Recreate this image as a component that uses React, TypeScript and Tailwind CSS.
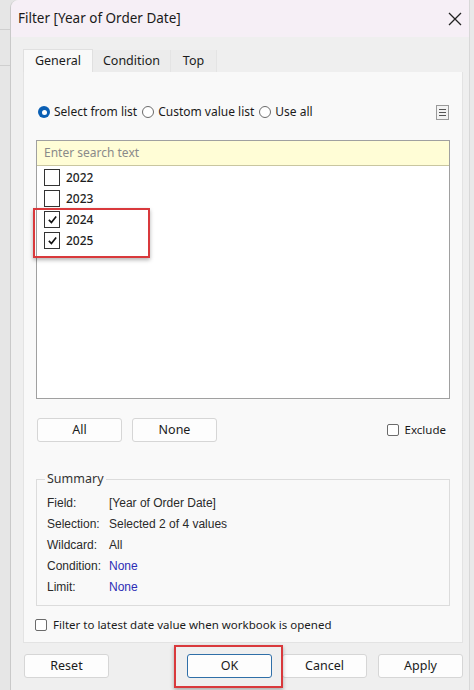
import React from 'react';

const font = { fontFamily: '"Noto Sans", "Open Sans", sans-serif' };
const tahoma = { fontFamily: '"Liberation Sans", Arial, sans-serif' };

const Radio: React.FC<{ checked?: boolean; label: string }> = ({ checked, label }) => (
  <label className="flex items-center gap-[4px]">
    {checked ? (
      <span className="w-[12px] h-[12px] rounded-full bg-[#0a5fb4] flex items-center justify-center">
        <span className="w-[5px] h-[5px] rounded-full bg-white" />
      </span>
    ) : (
      <span className="w-[12px] h-[12px] rounded-full border border-[#6b6b6b] bg-white" />
    )}
    <span>{label}</span>
  </label>
);

const Check: React.FC<{ checked?: boolean }> = ({ checked }) => (
  <span className="w-[16px] h-[17px] border border-[#333] bg-white flex items-center justify-center shrink-0">
    {checked && (
      <svg viewBox="0 0 12 12" className="w-[11px] h-[11px]">
        <path d="M2 6.5 L4.8 9.2 L10 2.8" fill="none" stroke="#111" strokeWidth="1.8" />
      </svg>
    )}
  </span>
);

const Btn: React.FC<{ label: string; primary?: boolean; className?: string }> = ({ label, primary, className }) => (
  <button
    className={`h-[24px] w-[85px] rounded-[3px] bg-[#fdfdfd] text-[12.5px] text-[#1b1b1b] ${
      primary ? 'border border-[#2f6fa8]' : 'border border-[#d6d6d6]'
    } ${className ?? ''}`}
  >
    {label}
  </button>
);

const years = [
  { y: '2022', c: false },
  { y: '2023', c: false },
  { y: '2024', c: true },
  { y: '2025', c: true },
];

const summary = [
  { k: 'Field:', v: '[Year of Order Date]' },
  { k: 'Selection:', v: 'Selected 2 of 4 values' },
  { k: 'Wildcard:', v: 'All' },
  { k: 'Condition:', v: 'None', blue: true },
  { k: 'Limit:', v: 'None', blue: true },
];

export default function App() {
  return (
    <div className="w-[474px] h-[690px] flex bg-[#e4e4e4] overflow-hidden text-[#1b1b1b]" style={font}>
      {/* background window behind the dialog */}
      <div className="w-[10px] shrink-0 flex flex-col bg-[#e6e6e6]">
        <div className="h-[30px] border-b border-[#cfcfcf]" />
        <div className="h-[36px] border-b border-[#cfcfcf]" />
      </div>

      {/* dialog */}
      <div className="w-[459px] shrink-0 flex flex-col bg-[#efefef] border-l border-[#c9c9c9] rounded-tl-[8px] relative">
        <div className="h-[37px] flex items-center justify-between pl-[7px] pr-[7px] bg-[#f6eff6] rounded-tl-[8px]">
          <span className="text-[13.5px] text-[#1a1a1a]">Filter [Year of Order Date]</span>
          <svg viewBox="0 0 14 14" className="w-[14px] h-[14px]">
            <path d="M1 1 L13 13 M13 1 L1 13" stroke="#222" strokeWidth="1.3" />
          </svg>
        </div>

        <div className="pl-[12px] pr-[6px] pt-[12px] flex flex-col">
          {/* tabs */}
          <div className="flex items-end text-[12.5px] h-[23px]">
            <div className="h-[23px] w-[70px] flex items-center justify-center bg-[#f9f9f9] border border-b-0 border-[#e0e0e0]">
              General
            </div>
            <div className="h-[22px] w-[78px] flex items-center justify-center bg-[#ececec] border-r border-[#e4e4e4]">
              Condition
            </div>
            <div className="h-[22px] w-[46px] flex items-center justify-center bg-[#ececec] border-r border-[#e4e4e4]">
              Top
            </div>
          </div>

          {/* panel */}
          <div className="h-[571px] bg-[#f9f9f9] border border-t-0 border-[#e3e3e3] pl-[12px] pr-[12px] flex flex-col">
            <div className="mt-[32px] h-[16px] flex items-center text-[12px] pl-[2px]">
              <Radio checked label="Select from list" />
              <span className="w-[5px]" />
              <Radio label="Custom value list" />
              <span className="w-[5px]" />
              <Radio label="Use all" />
              <span className="ml-auto mr-[1px] w-[13px] h-[15px] border border-[#9a9a9a] bg-[#f3f3f3] flex flex-col items-center justify-center gap-[2px]">
                <span className="w-[7px] h-[1px] bg-[#555]" />
                <span className="w-[7px] h-[1px] bg-[#555]" />
                <span className="w-[7px] h-[1px] bg-[#555]" />
              </span>
            </div>

            {/* search + list */}
            <div className="mt-[20px] h-[259px] border border-[#a0a0a0] bg-white flex flex-col">
              <div className="h-[25px] bg-[#fffdd6] border-b border-[#c9c6a0] flex items-center px-[7px] text-[12px] text-[#8a8a8a]">
                Enter search text
              </div>
              <div className="pt-[1px] pl-[7px] flex flex-col text-[12px]">
                {years.map((r) => (
                  <div key={r.y} className="h-[21px] flex items-center gap-[6px]">
                    <Check checked={r.c} />
                    <span className="font-medium text-[#1e1e1e]">{r.y}</span>
                  </div>
                ))}
              </div>
            </div>

            {/* All / None / Exclude */}
            <div className="mt-[19px] flex items-center">
              <Btn label="All" className="ml-[1px]" />
              <Btn label="None" className="ml-[10px]" />
              <label className="ml-auto mr-[4px] flex items-center gap-[6px] text-[11.5px]">
                <span className="w-[12px] h-[12px] border border-[#6b6b6b] rounded-[2px] bg-white" />
                Exclude
              </label>
            </div>

            {/* summary */}
            <fieldset className="mt-[28px] h-[136px] border border-[#dcdcdc] px-[10px] pt-[4px]" style={tahoma}>
              <legend className="px-[2px] ml-[-2px] text-[12.5px] text-[#333]" style={font}>
                Summary
              </legend>
              <div className="flex flex-col">
                {summary.map((s) => (
                  <div key={s.k} className="h-[21px] flex items-center text-[12px]">
                    <span className="w-[62px] text-[#2a2a2a]">{s.k}</span>
                    <span className={s.blue ? 'text-[#2d2db5]' : 'text-[#2a2a2a]'}>{s.v}</span>
                  </div>
                ))}
              </div>
            </fieldset>

            <label className="mt-[10px] ml-[-1px] flex items-center gap-[6px] text-[11.5px]">
              <span className="w-[12px] h-[12px] border border-[#6b6b6b] rounded-[2px] bg-white" />
              Filter to latest date value when workbook is opened
            </label>
          </div>

          {/* bottom buttons */}
          <div className="mt-[11px] flex items-center">
            <Btn label="Reset" className="ml-[1px]" />
            <Btn label="OK" primary className="ml-auto" />
            <Btn label="Cancel" className="ml-[10px]" />
            <Btn label="Apply" className="ml-[11px]" />
          </div>
        </div>

        {/* red highlight boxes */}
        <div className="absolute left-[22px] top-[208px] w-[117px] h-[50px] border-2 border-[#d9393c] shadow-[0_2px_4px_rgba(0,0,0,0.3)]" />
        <div className="absolute left-[163px] top-[645px] w-[109px] h-[43px] border-2 border-[#d9393c] shadow-[0_2px_4px_rgba(0,0,0,0.3)]" />
      </div>

      <div className="flex-1 bg-[#e9e9e9] border-l border-[#d8d8d8]" />
    </div>
  );
}
